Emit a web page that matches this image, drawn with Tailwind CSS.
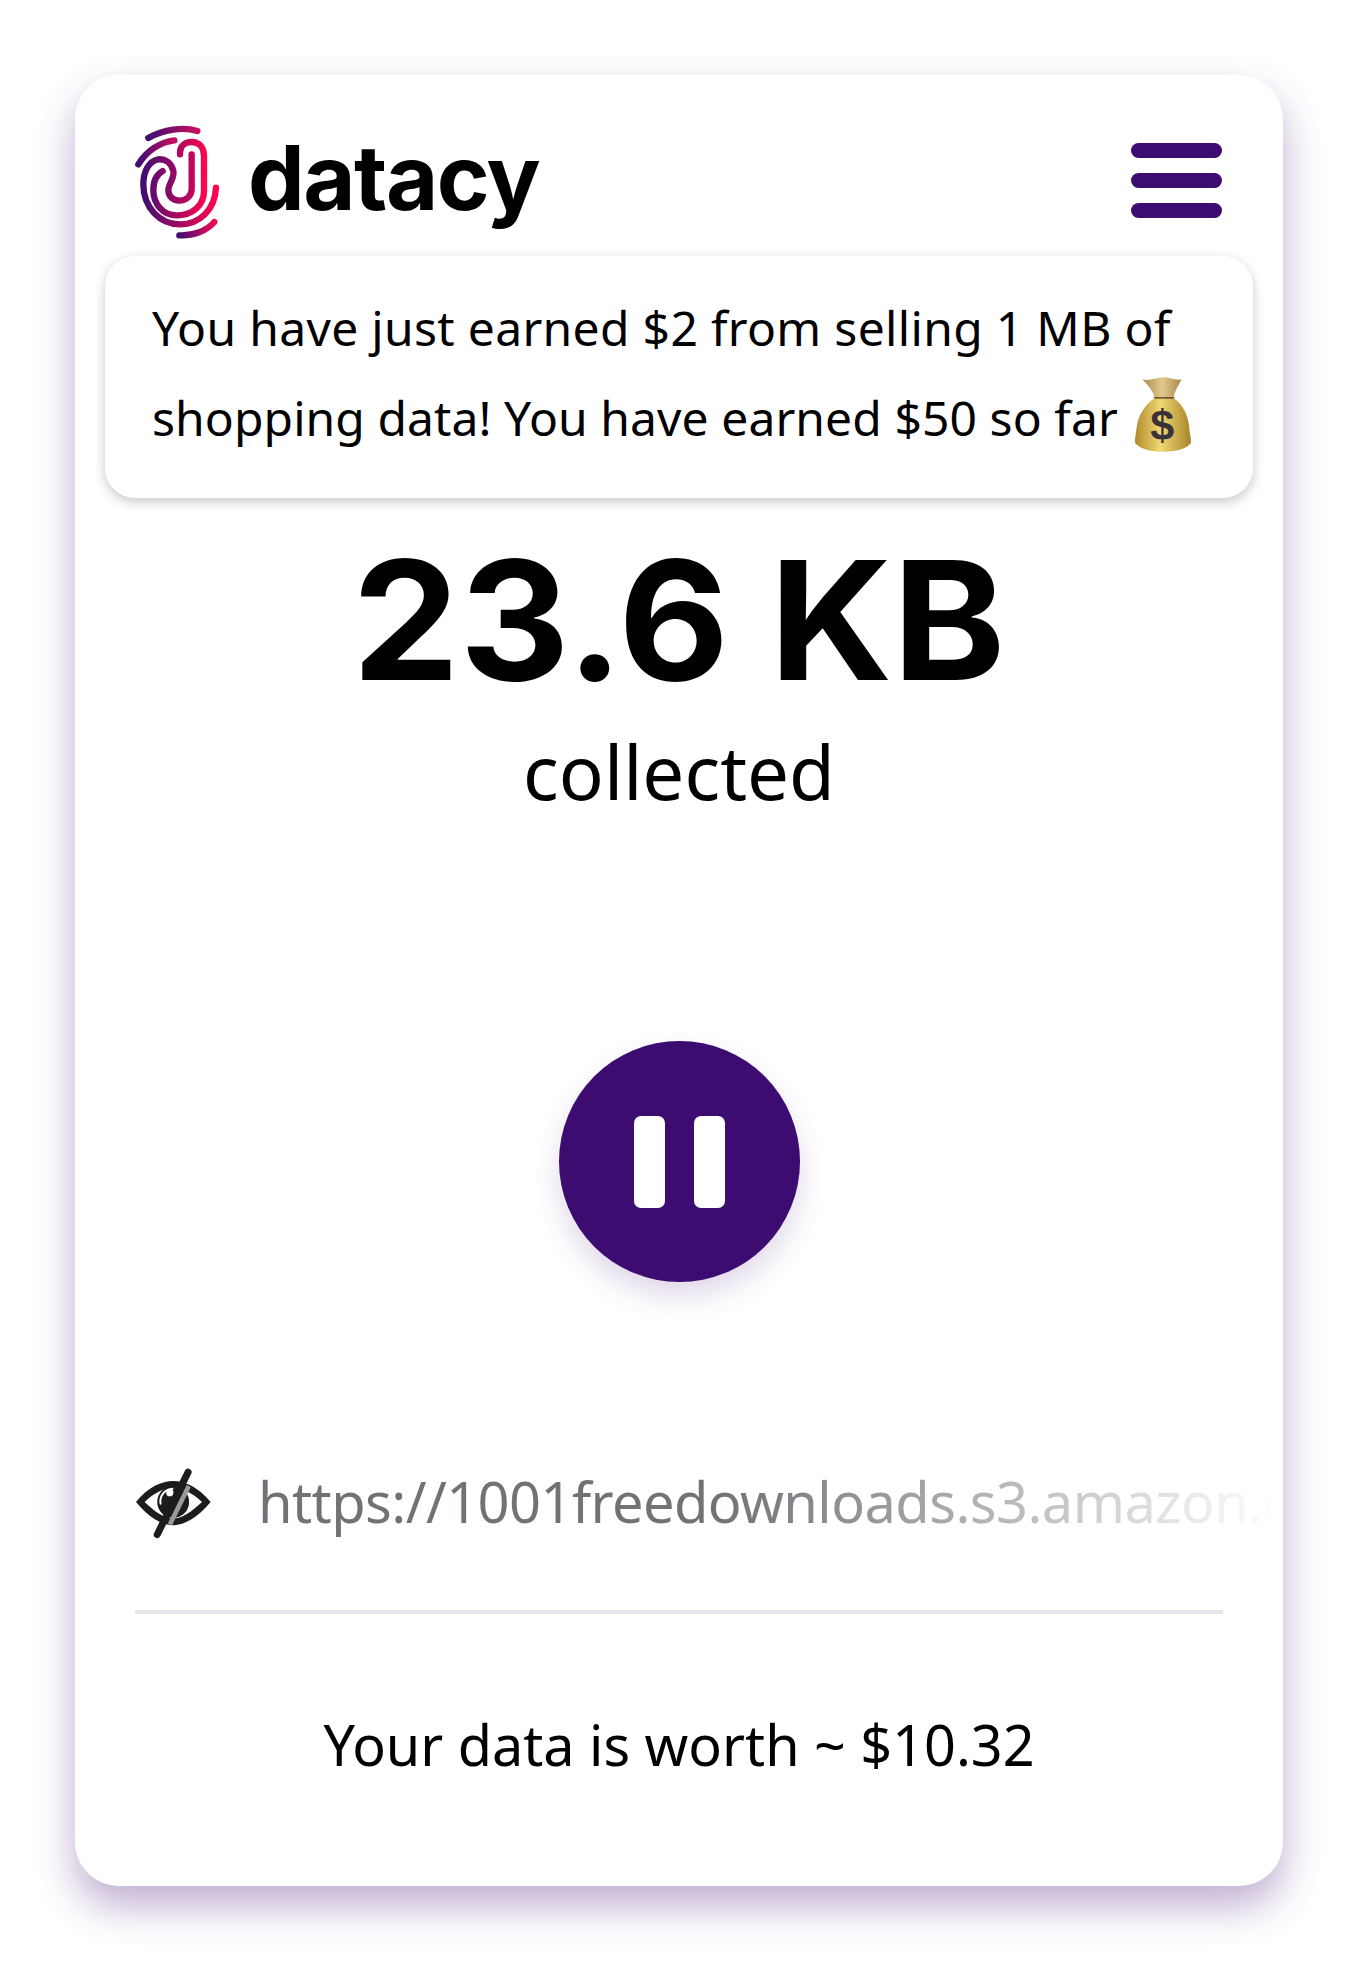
<!DOCTYPE html>
<html><head><meta charset="utf-8"><script src="https://cdn.jsdelivr.net/npm/@tailwindcss/browser@4"></script></head>
<body class="bg-white">
<div class="w-[1358px] h-[1962px] pt-[75px] pl-[75px] font-['Noto_Sans',sans-serif] overflow-hidden">
  <div class="w-[1208px] h-[1811px] rounded-[44px] bg-white shadow-[0_20px_40px_rgba(61,12,112,0.33)] flex flex-col">
    <header class="h-[181px] shrink-0 pt-[30px] pl-[45px] pr-[61px] flex items-center justify-between">
      <div class="flex items-center gap-[18px]">
        <svg width="110" height="130" viewBox="0 0 330 390" fill="none" stroke-linecap="round" stroke-width="19">
          <defs>
            <linearGradient id="g1" gradientUnits="objectBoundingBox" x1="0" y1="0" x2="1" y2="0"><stop offset="0" stop-color="#3f0d73"/><stop offset="1" stop-color="#c80f5f"/></linearGradient>
            <linearGradient id="g2" gradientUnits="userSpaceOnUse" x1="175" y1="0" x2="285" y2="0"><stop offset="0" stop-color="#3f0d73"/><stop offset="1" stop-color="#f00a55"/></linearGradient>
            <linearGradient id="g3" gradientUnits="userSpaceOnUse" x1="65" y1="0" x2="290" y2="0"><stop offset="0" stop-color="#3f0d73"/><stop offset="1" stop-color="#ff0550"/></linearGradient>
            <linearGradient id="g4" gradientUnits="userSpaceOnUse" x1="60" y1="0" x2="260" y2="0"><stop offset="0" stop-color="#3f0d73"/><stop offset="1" stop-color="#ff0550"/></linearGradient>
          </defs>
          <path stroke="url(#g1)" d="M85 66C130 40 190 32 232 45"/>
          <path stroke="url(#g1)" d="M55 145C80 105 120 78 163 73"/>
          <path stroke="url(#g4)" d="M180 115V110C180 90 195 78 215 78C238 78 252 95 252 120V225C252 270 215 298 170 298C130 298 100 265 100 222C100 195 110 175 128 165"/>
          <path stroke="url(#g3)" d="M215 115V220C215 240 198 254 178 254C158 254 145 240 145 222C145 205 165 185 160 165C155 140 135 128 115 130C85 135 70 170 70 205C70 275 120 325 180 325C240 325 285 280 288 215"/>
          <path stroke="url(#g2)" d="M178 358C220 360 260 345 283 318"/>
        </svg>
        <span class="font-['Inter',sans-serif] font-bold text-[90px] leading-none tracking-[-1.5px] text-black mt-[-6px]">datacy</span>
      </div>
      <div class="w-[91px] flex flex-col gap-[15px]">
        <div class="h-[15px] rounded-full bg-[#3d0c70]"></div>
        <div class="h-[15px] rounded-full bg-[#3d0c70]"></div>
        <div class="h-[15px] rounded-full bg-[#3d0c70]"></div>
      </div>
    </header>
    <div class="mx-[30px] h-[242px] shrink-0 rounded-[30px] bg-white shadow-[0_4px_12px_rgba(0,0,0,0.22)] pt-[27px] pl-[47px] text-[48px] leading-[90px] text-black">
      <div class="whitespace-nowrap tracking-[0.32px]">You have just earned $2 from selling 1 MB of</div>
      <div class="whitespace-nowrap flex items-center tracking-[0.08px]">shopping data! You have earned $50 so far
        <svg class="ml-[15px] mt-[-8px]" width="60" height="77" viewBox="100 50 180 232">
          <defs>
            <linearGradient id="b1" x1="0" y1="0" x2="1" y2="0"><stop offset="0" stop-color="#b08a2c"/><stop offset=".45" stop-color="#efd873"/><stop offset="1" stop-color="#a9842a"/></linearGradient>
            <linearGradient id="b2" x1="0" y1="0" x2="1" y2="0"><stop offset="0" stop-color="#a98748"/><stop offset=".5" stop-color="#e3c98f"/><stop offset="1" stop-color="#a98748"/></linearGradient>
          </defs>
          <path fill="url(#b2)" d="M128 60C150 68 170 52 195 54C215 56 230 64 246 60C236 80 225 95 222 116H165C160 95 145 78 128 60Z"/>
          <path fill="url(#b1)" d="M165 117H222C250 135 268 170 270 215C272 230 276 245 274 252C260 272 220 279 190 278C155 279 120 270 106 252C105 240 108 225 110 210C114 170 135 135 165 117Z"/>
          <path fill="none" stroke="#4f3810" stroke-width="4" d="M163 116H224"/>
          <text x="188" y="242" text-anchor="middle" font-family="Liberation Sans, sans-serif" font-size="130" font-weight="700" fill="#3a3238">$</text>
        </svg>
      </div>
    </div>
    <div class="h-[132px] mt-[56px] shrink-0 flex items-center justify-center">
      <span class="block font-['Inter',sans-serif] font-bold text-[165px] leading-none text-black whitespace-nowrap scale-x-[1.035]">23.6 KB</span>
    </div>
    <div class="text-center text-[74.5px] leading-[90px] text-black mt-[40px]">collected</div>
    <div class="flex justify-center mt-[225px] shrink-0">
      <div class="w-[241px] h-[241px] rounded-full bg-[#3d0c70] shadow-[0_14px_28px_rgba(61,12,112,0.16)] flex items-center justify-center gap-[29px]">
        <div class="w-[31px] h-[92px] rounded-[7px] bg-white"></div>
        <div class="w-[31px] h-[92px] rounded-[7px] bg-white"></div>
      </div>
    </div>
    <div class="ml-[60px] mr-[6px] mt-[174px] h-[90px] flex items-center gap-[45px] shrink-0">
      <svg class="shrink-0 mt-[4px]" width="78" height="72" viewBox="45 55 235 216">
        <path fill="#1c1c1c" fill-rule="evenodd" d="M48 160C85 115 125 97 160 97C195 97 235 115 273 160C235 205 195 230 160 230C125 230 85 205 48 160ZM74 160C105 130 135 118 160 118C185 118 215 130 247 160C215 190 185 210 160 210C135 210 105 190 74 160Z"/>
        <circle cx="160" cy="160" r="48" fill="#1c1c1c"/>
        <path fill="none" stroke="#fff" stroke-width="6" stroke-linecap="round" d="M122 165C118 140 135 122 158 120"/>
        <circle cx="150" cy="132" r="11" fill="#fff"/>
        <path stroke="#9a9a9a" stroke-width="14" d="M207 112L150 228"/>
        <path stroke="#1c1c1c" stroke-width="21" stroke-linecap="round" d="M205 70L112 258"/>
      </svg>
      <div class="flex-1 min-w-0 overflow-hidden whitespace-nowrap text-[56px] tracking-[-0.6px] leading-[90px] text-transparent bg-clip-text bg-linear-to-r from-[#6f7375] from-[45%] to-[#ffffff] to-[100%]">https://1001freedownloads.s3.amazon.com</div>
    </div>
    <div class="mx-[60px] mt-[64px] h-[4px] shrink-0 bg-[#e6e6ea]"></div>
    <div class="text-center text-[55.7px] leading-[90px] text-black mt-[85px]">Your data is worth ~ $10.32</div>
  </div>
</div>
</body></html>
